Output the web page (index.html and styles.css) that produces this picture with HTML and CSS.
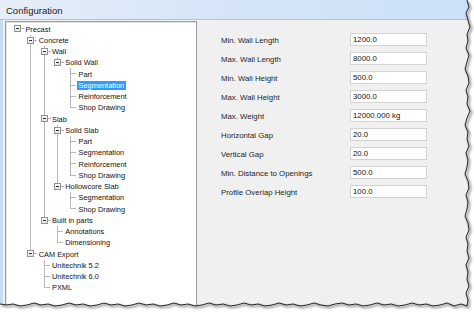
FILE: index.html
```html
<!DOCTYPE html>
<html>
<head>
<meta charset="utf-8">
<title>Configuration</title>
<link rel="stylesheet" href="styles.css">
</head>
<body>
<div class="stage">
  <div class="window">
    <div class="titlebar">Configuration</div>
    <div class="content">
      <div class="treepanel">
        <ul class="tree root">
          <li class="node"><div class="row"><span class="btn"></span><span class="lbl">Precast</span></div>
            <ul>
              <li class="node"><div class="row"><span class="btn"></span><span class="lbl">Concrete</span></div>
                <ul>
                  <li class="node"><div class="row"><span class="btn"></span><span class="lbl">Wall</span></div>
                    <ul>
                      <li class="node last"><div class="row"><span class="btn"></span><span class="lbl">Solid Wall</span></div>
                        <ul>
                          <li class="leaf"><div class="row"><span class="lbl">Part</span></div></li>
                          <li class="leaf"><div class="row"><span class="lbl sel">Segmentation</span></div></li>
                          <li class="leaf"><div class="row"><span class="lbl">Reinforcement</span></div></li>
                          <li class="leaf last"><div class="row"><span class="lbl">Shop Drawing</span></div></li>
                        </ul>
                      </li>
                    </ul>
                  </li>
                  <li class="node"><div class="row"><span class="btn"></span><span class="lbl">Slab</span></div>
                    <ul>
                      <li class="node"><div class="row"><span class="btn"></span><span class="lbl">Solid Slab</span></div>
                        <ul>
                          <li class="leaf"><div class="row"><span class="lbl">Part</span></div></li>
                          <li class="leaf"><div class="row"><span class="lbl">Segmentation</span></div></li>
                          <li class="leaf"><div class="row"><span class="lbl">Reinforcement</span></div></li>
                          <li class="leaf last"><div class="row"><span class="lbl">Shop Drawing</span></div></li>
                        </ul>
                      </li>
                      <li class="node last"><div class="row"><span class="btn"></span><span class="lbl">Hollowcore Slab</span></div>
                        <ul>
                          <li class="leaf"><div class="row"><span class="lbl">Segmentation</span></div></li>
                          <li class="leaf last"><div class="row"><span class="lbl">Shop Drawing</span></div></li>
                        </ul>
                      </li>
                    </ul>
                  </li>
                  <li class="node last"><div class="row"><span class="btn"></span><span class="lbl">Built in parts</span></div>
                    <ul>
                      <li class="leaf"><div class="row"><span class="lbl">Annotations</span></div></li>
                      <li class="leaf last"><div class="row"><span class="lbl">Dimensioning</span></div></li>
                    </ul>
                  </li>
                </ul>
              </li>
              <li class="node last"><div class="row"><span class="btn"></span><span class="lbl">CAM Export</span></div>
                <ul>
                  <li class="leaf"><div class="row"><span class="lbl">Unitechnik 5.2</span></div></li>
                  <li class="leaf"><div class="row"><span class="lbl">Unitechnik 6.0</span></div></li>
                  <li class="leaf last"><div class="row"><span class="lbl">PXML</span></div></li>
                </ul>
              </li>
            </ul>
          </li>
        </ul>
      </div>
      <div class="form">
        <span class="flabel">Min. Wall Length</span><span class="field">1200.0</span>
        <span class="flabel">Max. Wall Length</span><span class="field">8000.0</span>
        <span class="flabel">Min. Wall Height</span><span class="field">500.0</span>
        <span class="flabel">Max. Wall Height</span><span class="field">3000.0</span>
        <span class="flabel">Max. Weight</span><span class="field">12000.000 kg</span>
        <span class="flabel">Horizontal Gap</span><span class="field">20.0</span>
        <span class="flabel">Vertical Gap</span><span class="field">20.0</span>
        <span class="flabel">Min. Distance to Openings</span><span class="field">500.0</span>
        <span class="flabel">Profile Overlap Height</span><span class="field">100.0</span>
      </div>
    </div>
  </div>
  <svg class="tear" width="474" height="315" viewBox="0 0 474 315">
    <defs>
      <filter id="blur" x="-10%" y="-10%" width="120%" height="120%"><feGaussianBlur stdDeviation="1"/></filter>
    </defs>
    <polyline class="tear-shadow" transform="translate(1.5 1.5)" filter="url(#blur)" points="467,0 469,7 466,13 468,20 470,27 467,34 468,41 466,48 469,55 467,62 465,69 468,76 469,83 466,90 468,97 467,104 470,111 467,118 465,125 468,132 467,139 469,146 466,153 468,160 467,167 465,174 468,181 469,188 466,195 468,202 467,209 465,216 468,223 469,230 466,237 468,244 467,251 469,258 466,265 468,272 467,279 469,286 466,293 468,300 467,306 461,304 454,306 447,303 440,305 433,306 426,304 419,305 412,303 405,305 398,306 391,304 384,305 377,303 370,305 363,306 356,304 349,305 342,303 335,304 328,306 321,305 314,303 307,305 300,306 293,304 286,305 279,303 272,305 265,306 258,304 251,305 244,303 237,305 230,306 223,304 216,305 209,303 202,305 195,306 188,304 181,305 174,303 167,305 160,306 153,304 146,305 139,303 132,305 125,306 118,304 111,305 104,303 97,305 90,306 83,304 76,305 69,303 62,305 55,306 48,304 41,305 34,303 27,305 20,306 13,304 6,305 0,304"/>
    <polyline class="tear-line" points="467,0 469,7 466,13 468,20 470,27 467,34 468,41 466,48 469,55 467,62 465,69 468,76 469,83 466,90 468,97 467,104 470,111 467,118 465,125 468,132 467,139 469,146 466,153 468,160 467,167 465,174 468,181 469,188 466,195 468,202 467,209 465,216 468,223 469,230 466,237 468,244 467,251 469,258 466,265 468,272 467,279 469,286 466,293 468,300 467,306 461,304 454,306 447,303 440,305 433,306 426,304 419,305 412,303 405,305 398,306 391,304 384,305 377,303 370,305 363,306 356,304 349,305 342,303 335,304 328,306 321,305 314,303 307,305 300,306 293,304 286,305 279,303 272,305 265,306 258,304 251,305 244,303 237,305 230,306 223,304 216,305 209,303 202,305 195,306 188,304 181,305 174,303 167,305 160,306 153,304 146,305 139,303 132,305 125,306 118,304 111,305 104,303 97,305 90,306 83,304 76,305 69,303 62,305 55,306 48,304 41,305 34,303 27,305 20,306 13,304 6,305 0,304"/>
  </svg>
</div>
</body>
</html>
```

FILE: styles.css
```css
html, body {
  margin: 0;
  padding: 0;
  background: #ffffff;
}

.stage {
  position: relative;
  width: 474px;
  height: 315px;
  overflow: hidden;
}

.window {
  width: 474px;
  height: 315px;
  display: flex;
  flex-direction: column;
  box-sizing: border-box;
  border-left: 3px solid #c9dcf0;
  background: #f0f0f0;
  clip-path: polygon(0 0, 467px 0, 469px 7px, 466px 13px, 468px 20px, 470px 27px, 467px 34px, 468px 41px, 466px 48px, 469px 55px, 467px 62px, 465px 69px, 468px 76px, 469px 83px, 466px 90px, 468px 97px, 467px 104px, 470px 111px, 467px 118px, 465px 125px, 468px 132px, 467px 139px, 469px 146px, 466px 153px, 468px 160px, 467px 167px, 465px 174px, 468px 181px, 469px 188px, 466px 195px, 468px 202px, 467px 209px, 465px 216px, 468px 223px, 469px 230px, 466px 237px, 468px 244px, 467px 251px, 469px 258px, 466px 265px, 468px 272px, 467px 279px, 469px 286px, 466px 293px, 468px 300px, 467px 306px, 461px 304px, 454px 306px, 447px 303px, 440px 305px, 433px 306px, 426px 304px, 419px 305px, 412px 303px, 405px 305px, 398px 306px, 391px 304px, 384px 305px, 377px 303px, 370px 305px, 363px 306px, 356px 304px, 349px 305px, 342px 303px, 335px 304px, 328px 306px, 321px 305px, 314px 303px, 307px 305px, 300px 306px, 293px 304px, 286px 305px, 279px 303px, 272px 305px, 265px 306px, 258px 304px, 251px 305px, 244px 303px, 237px 305px, 230px 306px, 223px 304px, 216px 305px, 209px 303px, 202px 305px, 195px 306px, 188px 304px, 181px 305px, 174px 303px, 167px 305px, 160px 306px, 153px 304px, 146px 305px, 139px 303px, 132px 305px, 125px 306px, 118px 304px, 111px 305px, 104px 303px, 97px 305px, 90px 306px, 83px 304px, 76px 305px, 69px 303px, 62px 305px, 55px 306px, 48px 304px, 41px 305px, 34px 303px, 27px 305px, 20px 306px, 13px 304px, 6px 305px, 0 304px);
}

.titlebar {
  height: 19px;
  flex: none;
  margin-left: -3px;
  padding-left: 6px;
  border-bottom: 1px solid #b3c2d3;
  background: linear-gradient(to right, #e6eef8 0%, #d7e6f7 40%, #cbe1f7 100%);
  font-family: "Liberation Sans", Arial, sans-serif;
  font-size: 9.5px;
  line-height: 21px;
  color: #1b1b1b;
}

.content {
  flex: 1;
  display: flex;
  min-height: 0;
}

.treepanel {
  margin: 1px 0 0 2px;
  width: 192px;
  flex: none;
  box-sizing: border-box;
  border: 1px solid #9a9ea5;
  border-bottom: none;
  box-shadow: inset 1px 1px 0 #e2e3e5;
  background: #ffffff;
  overflow: hidden;
  padding: 1.4px 0 0 0;
}

.tree, .tree ul {
  list-style: none;
  margin: 0;
  padding: 0;
}

.tree {
  padding-left: 11px;
}

.tree ul {
  margin-left: 13.3px;
}

.tree li {
  position: relative;
}

.tree li::before {
  content: "";
  position: absolute;
  left: 0;
  top: 0;
  bottom: 0;
  width: 1px;
  background: #b8b8b8;
}

.tree li.last::before {
  bottom: auto;
  height: 5.6px;
}

.tree.root > li::before {
  display: none;
}

.row {
  position: relative;
  height: 11.25px;
  display: flex;
  align-items: center;
}

.row::before {
  content: "";
  position: absolute;
  top: 5.1px;
  height: 1px;
  background: #b8b8b8;
}

.leaf > .row::before {
  left: 0;
  width: 6px;
}

.node > .row::before {
  left: 3px;
  width: 4px;
}

.btn {
  position: absolute;
  z-index: 1;
  left: -3px;
  top: 2.1px;
  width: 7px;
  height: 7px;
  box-sizing: border-box;
  border: 1px solid #929292;
  background: linear-gradient(#ffffff, #e4e4e4);
}

.btn::after {
  content: "";
  position: absolute;
  left: 1px;
  top: 2px;
  width: 3px;
  height: 1px;
  background: #2a2a2a;
}

.lbl {
  margin-left: 7px;
  padding: 0 1.4px;
  font-family: "Liberation Sans", Arial, sans-serif;
  font-size: 7.4px;
  line-height: 9px;
  color: #111111;
  white-space: nowrap;
}

.lbl.sel {
  background: #3399ff;
  color: #ffffff;
}

.form {
  display: grid;
  grid-template-columns: 129px 77px;
  row-gap: 6.1px;
  align-content: start;
  align-items: center;
  padding: 12.7px 0 0 24px;
  font-family: "Liberation Sans", Arial, sans-serif;
  font-size: 7.8px;
  color: #1e1e1e;
}

.flabel {
  white-space: nowrap;
  padding-top: 2px;
}

.field {
  height: 13px;
  box-sizing: border-box;
  border: 1px solid #d3d3d3;
  background: #ffffff;
  padding-left: 2px;
  line-height: 11px;
  white-space: nowrap;
  color: #111111;
}

.tear {
  position: absolute;
  left: 0;
  top: 0;
  pointer-events: none;
}

.tear polyline {
  fill: none;
  stroke-linejoin: round;
}

.tear-shadow {
  stroke: rgba(0, 0, 0, 0.4);
  stroke-width: 2;
}

.tear-line {
  stroke: #262626;
  stroke-width: 1;
}
```
